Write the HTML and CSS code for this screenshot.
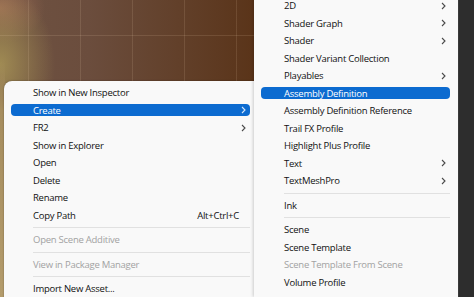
FILE: index.html
```html
<!DOCTYPE html>
<html lang="en">
<head>
<meta charset="utf-8">
<title>Create menu</title>
<link rel="stylesheet" href="styles.css">
</head>
<body>
<div class="scene">
  <div class="viewport">
    <ul class="menu menu-main">
      <li><div class="row">Show in New Inspector</div></li>
      <li><div class="row active">Create<svg class="chev" viewBox="0 0 5 8"><path d="M1 1l3 3-3 3"/></svg></div></li>
      <li><div class="row">FR2<svg class="chev" viewBox="0 0 5 8"><path d="M1 1l3 3-3 3"/></svg></div></li>
      <li><div class="row">Show in Explorer</div></li>
      <li><div class="row">Open</div></li>
      <li><div class="row">Delete</div></li>
      <li><div class="row">Rename</div></li>
      <li><div class="row">Copy Path<span class="key">Alt+Ctrl+C</span></div></li>
      <li class="sep"></li>
      <li><div class="row off">Open Scene Additive</div></li>
      <li class="sep"></li>
      <li><div class="row off">View in Package Manager</div></li>
      <li class="sep"></li>
      <li><div class="row">Import New Asset...</div></li>
    </ul>
  </div>
  <ul class="menu menu-sub">
    <li><div class="row">2D<svg class="chev" viewBox="0 0 5 8"><path d="M1 1l3 3-3 3"/></svg></div></li>
    <li><div class="row">Shader Graph<svg class="chev" viewBox="0 0 5 8"><path d="M1 1l3 3-3 3"/></svg></div></li>
    <li><div class="row">Shader<svg class="chev" viewBox="0 0 5 8"><path d="M1 1l3 3-3 3"/></svg></div></li>
    <li><div class="row">Shader Variant Collection</div></li>
    <li><div class="row">Playables<svg class="chev" viewBox="0 0 5 8"><path d="M1 1l3 3-3 3"/></svg></div></li>
    <li><div class="row active">Assembly Definition</div></li>
    <li><div class="row">Assembly Definition Reference</div></li>
    <li><div class="row">Trail FX Profile</div></li>
    <li><div class="row">Highlight Plus Profile</div></li>
    <li><div class="row">Text<svg class="chev" viewBox="0 0 5 8"><path d="M1 1l3 3-3 3"/></svg></div></li>
    <li><div class="row">TextMeshPro<svg class="chev" viewBox="0 0 5 8"><path d="M1 1l3 3-3 3"/></svg></div></li>
    <li class="sep"></li>
    <li><div class="row">Ink</div></li>
    <li class="sep"></li>
    <li><div class="row">Scene</div></li>
    <li><div class="row">Scene Template</div></li>
    <li><div class="row off">Scene Template From Scene</div></li>
    <li><div class="row">Volume Profile</div></li>
  </ul>
  <div class="panel-edge"></div>
</div>
</body>
</html>
```

FILE: styles.css
```css
body {
    margin: 0;
    width: 474px;
    height: 297px;
    overflow: hidden;
    font-family: "Open Sans", "Noto Sans", sans-serif;
    font-size: 9.5px;
    letter-spacing: -0.25px;
    color: #111;
}
.scene {
    display: grid;
    grid-template-columns: 254px 204px 1fr;
    height: 297px;
}
.viewport {
    padding: 81px 0 0 4px;
    overflow: hidden;
    background:
        repeating-linear-gradient(to right, transparent 0 28px, rgba(255, 225, 190, 0.12) 28px 29px, transparent 29px 52px),
        linear-gradient(to bottom, transparent 0 35px, rgba(255, 225, 190, 0.12) 35px 36px, transparent 36px),
        linear-gradient(to bottom, rgba(140, 110, 70, 0) 60px, #a68d5e 110px, #b49c6c 297px) 0 0 / 5px 100% no-repeat,
        radial-gradient(ellipse 55px 80px at 0 65px, rgba(165, 145, 85, 0.9), transparent),
        radial-gradient(ellipse 45px 35px at 0 8px, rgba(170, 115, 90, 0.75), transparent),
        linear-gradient(to right, #6e5242 0%, #6b4d3d 35%, #62402a 70%, #5a3419 100%);
}
.menu {
    list-style: none;
    margin: 0;
    background: #f9f9f9;
}
.menu-main {
    height: 100%;
    padding: 3px 4px 0 7px;
    border-top-left-radius: 8px;
    box-shadow: 0 0 2px rgba(0, 0, 0, 0.35);
}
.menu-sub {
    margin-top: -3px;
    padding: 0 8px 0 7px;
    box-shadow: -1px 0 3px rgba(0, 0, 0, 0.18);
}
.menu li {
    padding: 2.75px 0;
}
.menu .row {
    display: flex;
    align-items: center;
    height: 12px;
    padding: 0 4px 0 22px;
    border-radius: 4px;
    white-space: nowrap;
}
.menu-sub .row {
    padding-left: 23px;
}
.menu .row.active {
    background: #0c6bd0;
    color: #fff;
}
.menu .row.off {
    color: #a2a2a2;
}
.menu li.sep {
    height: 1px;
    padding: 0;
    margin: 3px 0 3px 22px;
    background: #e1e1e1;
}
.menu-sub li.sep {
    margin-left: 23px;
}
.chev {
    width: 5px;
    height: 8px;
    margin-left: auto;
    fill: none;
    stroke: #4a4a4a;
    stroke-width: 1.1;
}
.row.active .chev {
    stroke: #d6e6f8;
}
.key {
    margin-left: auto;
    margin-right: 7px;
}
.panel-edge {
    background: #2d2d2d;
    border-left: 1px solid #3a3a3a;
}
```
